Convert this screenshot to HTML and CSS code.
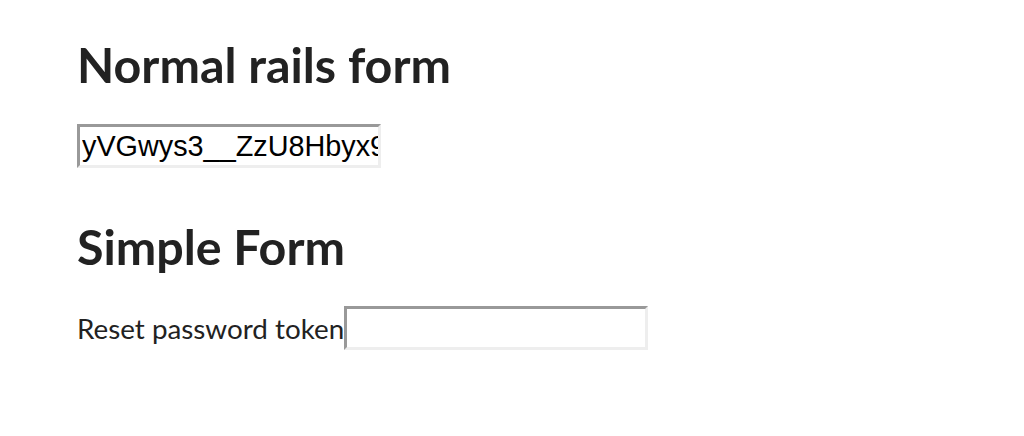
FILE: index.html
```html
<!DOCTYPE html>
<html>
<head>
<meta charset="utf-8">
<link rel="stylesheet" href="styles.css">
</head>
<body>
<main class="page">
  <h1 class="title">Normal rails form</h1>
  <form class="form">
    <input class="field field-filled" type="text" value="yVGwys3__ZzU8Hbyx9">
  </form>
  <h1 class="title title-second">Simple Form</h1>
  <form class="form">
    <div class="row">
      <label class="label">Reset password token</label><input class="field" type="text" value="">
    </div>
  </form>
</main>
</body>
</html>
```
FILE: styles.css
```css
html, body {
  margin: 0;
  padding: 0;
  background: #fff;
}
.page {
  padding: 35px 0 0 77px;
  font-family: Lato, "Liberation Sans", sans-serif;
  color: #222;
}
.title {
  margin: 0;
  font-size: 48.4px;
  font-weight: 700;
  line-height: 58px;
  color: #222;
}
.title-second {
  margin-top: 49px;
}
.form {
  margin: 31px 0 0 0;
}
.row {
  display: flex;
  align-items: center;
}
.label {
  font-size: 27.8px;
  color: #222;
}
.field {
  box-sizing: border-box;
  width: 304px;
  height: 44px;
  margin: 0;
  padding: 0 0 0 2px;
  border-style: solid;
  border-width: 3px;
  border-color: #999 #eee #eee #999;
  font-family: "Liberation Sans", Arial, sans-serif;
  font-size: 28.8px;
  color: #000;
  background: #fff;
  outline: none;
}
```
